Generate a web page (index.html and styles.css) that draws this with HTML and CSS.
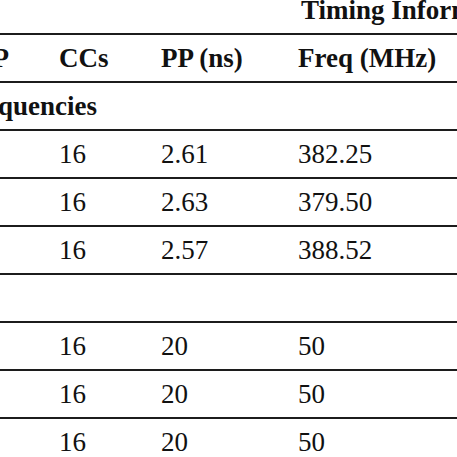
FILE: index.html
```html
<!DOCTYPE html>
<html lang="en">
<head>
<meta charset="utf-8">
<title>Timing Information</title>
<link rel="stylesheet" href="styles.css">
</head>
<body>
<div class="frame">
  <table class="timing">
    <colgroup>
      <col class="c-name">
      <col class="c-ccs">
      <col class="c-pp">
      <col class="c-freq">
    </colgroup>
    <tr class="group-head">
      <td></td>
      <td></td>
      <td></td>
      <td class="group-title">Timing Information</td>
    </tr>
    <tr class="col-head">
      <td class="name-cell">DSP</td>
      <td>CCs</td>
      <td>PP (ns)</td>
      <td>Freq (MHz)</td>
    </tr>
    <tr class="section">
      <td colspan="4">Frequencies</td>
    </tr>
    <tr>
      <td></td><td>16</td><td>2.61</td><td>382.25</td>
    </tr>
    <tr>
      <td></td><td>16</td><td>2.63</td><td>379.50</td>
    </tr>
    <tr>
      <td></td><td>16</td><td>2.57</td><td>388.52</td>
    </tr>
    <tr class="section">
      <td colspan="4"></td>
    </tr>
    <tr>
      <td></td><td>16</td><td>20</td><td>50</td>
    </tr>
    <tr>
      <td></td><td>16</td><td>20</td><td>50</td>
    </tr>
    <tr>
      <td></td><td>16</td><td>20</td><td>50</td>
    </tr>
  </table>
</div>
</body>
</html>
```
FILE: styles.css
```css
html, body {
  margin: 0;
  padding: 0;
  background: #ffffff;
}

.frame {
  width: 457px;
  height: 457px;
  overflow: hidden;
}

.timing {
  table-layout: fixed;
  width: 542px;
  margin-left: -42px;
  margin-top: -13px;
  border-collapse: separate;
  border-spacing: 0;
  font-family: "Liberation Serif", "Times New Roman", serif;
  font-size: 27px;
  color: #111111;
}

.c-name { width: 101px; }
.c-ccs { width: 102px; }
.c-pp { width: 137px; }
.c-freq { width: 202px; }

.timing td {
  height: 46px;
  padding: 0;
  border-bottom: 2px solid #1c1c1c;
  vertical-align: middle;
  text-align: left;
  white-space: nowrap;
  overflow: visible;
}

.group-head td,
.col-head td,
.section td {
  font-weight: bold;
}

.group-title {
  padding-left: 3px !important;
}
```
